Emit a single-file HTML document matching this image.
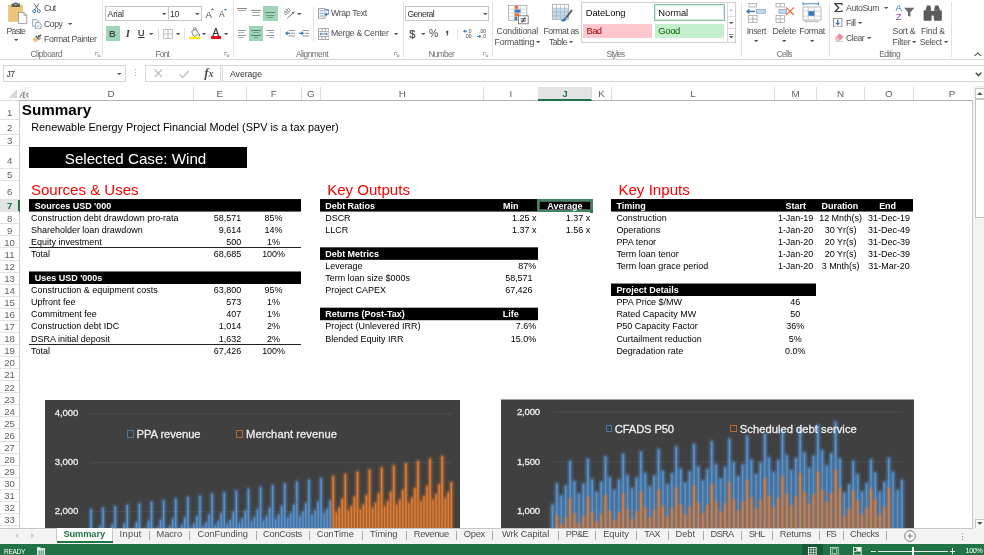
<!DOCTYPE html>
<html><head><meta charset="utf-8"><title>Summary - Excel</title>
<style>
html,body{margin:0;padding:0;}
body{width:984px;height:555px;overflow:hidden;background:#fff;position:relative;font-family:"Liberation Sans",sans-serif;}
#app{position:absolute;left:0;top:0;width:984px;height:555px;overflow:hidden;background:#fff;will-change:transform;}
#app div,#app span,#app svg{position:absolute;}
#app span{white-space:pre;display:block;}
</style></head><body><div id="app">
<div style="left:0px;top:59px;width:984px;height:1px;background:#d6d6d6;"></div>
<div style="left:102px;top:2px;width:1px;height:55px;background:#e2e2e2;"></div>
<div style="left:232.5px;top:2px;width:1px;height:55px;background:#e2e2e2;"></div>
<div style="left:403px;top:2px;width:1px;height:55px;background:#e2e2e2;"></div>
<div style="left:492px;top:2px;width:1px;height:55px;background:#e2e2e2;"></div>
<div style="left:740.5px;top:2px;width:1px;height:55px;background:#e2e2e2;"></div>
<div style="left:828.5px;top:2px;width:1px;height:55px;background:#e2e2e2;"></div>
<div style="left:950.5px;top:2px;width:1px;height:55px;background:#e2e2e2;"></div>
<svg style="left:7px;top:2px" width="21" height="23" viewBox="0 0 21 23">
<rect x="1.2" y="3" width="14.8" height="16.8" fill="#ecc57a"/>
<rect x="4.4" y="1.6" width="8.6" height="3.4" rx=".6" fill="#5e5e5e"/>
<rect x="6.9" y=".4" width="3.6" height="2.4" rx="1.1" fill="#5e5e5e"/>
<rect x="7.8" y="2" width="1.8" height="1" fill="#ecc57a"/>
<path d="M11.6 10.4h5.4l2.8 2.8v8.4h-8.2z" fill="#fff" stroke="#8a8a8a" stroke-width=".8"/>
<path d="M17 10.4v2.8h2.8" fill="none" stroke="#8a8a8a" stroke-width=".8"/>
</svg>
<span style="left:6.5px;top:25px;font-size:8.7px;line-height:12px;color:#4d4d4d;letter-spacing:-0.71px;">Paste</span>
<svg style="left:13.5px;top:39.2px" width="4.2" height="2.2" viewBox="0 0 4.2 2.2"><path d="M0 0H4.2L2.1 2.2Z" fill="#555"/></svg>
<svg style="left:32px;top:2.5px" width="9" height="10.5" viewBox="0 0 9 10.5">
<path d="M2 .5L6.2 6.6M7 .5L2.8 6.6" stroke="#6a6a6a" stroke-width="1" fill="none"/>
<circle cx="2.2" cy="8.2" r="1.5" fill="none" stroke="#3b78b8" stroke-width="1"/>
<circle cx="6.8" cy="8.2" r="1.5" fill="none" stroke="#3b78b8" stroke-width="1"/>
</svg>
<span style="left:44px;top:2px;font-size:8.7px;line-height:12px;color:#4d4d4d;letter-spacing:-0.68px;">Cut</span>
<svg style="left:32px;top:18.5px" width="10" height="10.5" viewBox="0 0 10 10.5">
<path d="M.6 .6h4.2l1.4 1.4v5.2H.6z" fill="#fff" stroke="#7b8da0" stroke-width=".8"/>
<path d="M3.6 3.4h3.6l1.8 1.8v4.6H3.6z" fill="#fff" stroke="#7b8da0" stroke-width=".8"/>
<path d="M5 6.2h2.6M5 7.8h2.6" stroke="#9fb3c8" stroke-width=".6"/>
</svg>
<span style="left:44px;top:17.6px;font-size:8.7px;line-height:12px;color:#4d4d4d;letter-spacing:-0.45px;">Copy</span>
<svg style="left:67.9px;top:22.5px" width="4.2" height="2.2" viewBox="0 0 4.2 2.2"><path d="M0 0H4.2L2.1 2.2Z" fill="#555"/></svg>
<svg style="left:32px;top:34px" width="10.4" height="9" viewBox="0 0 10.4 9">
<path d="M.4 5.2L3.6 2.6l3 3.4L3.2 8.6z" fill="#ecc57a"/>
<path d="M3.4 2.2l1-.8 3.4 3.8-1 .8z" fill="#555"/>
<path d="M5.8 2.6L8.6 .3l1 1.1-2.8 2.3z" fill="#555"/>
<path d="M7.4 3.6l2 1M6.4 1l.4 1.6" stroke="#555" stroke-width=".7"/>
</svg>
<span style="left:44px;top:32.6px;font-size:8.7px;line-height:12px;color:#4d4d4d;letter-spacing:-0.35px;">Format Painter</span>
<span style="left:30.5px;top:48.8px;font-size:8.3px;line-height:11px;color:#6e6e6e;letter-spacing:-0.45px;">Clipboard</span>
<svg style="left:95px;top:51.7px" width="5.5" height="5.5" viewBox="0 0 5.5 5.5"><path d="M.4 3.4V.4h3" fill="none" stroke="#8a8a8a" stroke-width=".7"/><path d="M2 2l2.6 2.6M4.8 2.6v2.2H2.6" fill="none" stroke="#8a8a8a" stroke-width=".7"/></svg>
<div style="left:105px;top:6px;width:64px;height:15px;background:#fff;border:1px solid #c6c6c6;box-sizing:border-box;"></div>
<div style="left:168px;top:6px;width:34px;height:15px;background:#fff;border:1px solid #c6c6c6;box-sizing:border-box;"></div>
<span style="left:107.6px;top:7.5px;font-size:8.7px;line-height:12px;color:#333;letter-spacing:-0.24px;">Arial</span>
<svg style="left:161.7px;top:12.5px" width="4.2" height="2.2" viewBox="0 0 4.2 2.2"><path d="M0 0H4.2L2.1 2.2Z" fill="#555"/></svg>
<span style="left:170px;top:7.5px;font-size:8.7px;line-height:12px;color:#333;letter-spacing:-0.44px;">10</span>
<svg style="left:194.7px;top:12.5px" width="4.2" height="2.2" viewBox="0 0 4.2 2.2"><path d="M0 0H4.2L2.1 2.2Z" fill="#555"/></svg>
<span style="left:205.4px;top:7.5px;font-size:9.6px;line-height:13px;color:#4d4d4d;">A</span>
<svg style="left:211.3px;top:8.3px" width="3" height="2" viewBox="0 0 3 2"><path d="M0 2L1.5 0L3 2Z" fill="#3b78b8"/></svg>
<span style="left:219px;top:9px;font-size:8.4px;line-height:11px;color:#4d4d4d;">A</span>
<svg style="left:224.3px;top:8.6px" width="3" height="2" viewBox="0 0 3 2"><path d="M0 0L1.5 2L3 0Z" fill="#3b78b8"/></svg>
<div style="left:105.5px;top:26.2px;width:14px;height:14.6px;background:#9fd5b7;"></div>
<span style="left:109.01px;top:27px;font-size:9.4px;line-height:13px;color:#4a4a4a;font-weight:bold;">B</span>
<span style="left:126.07px;top:26.9px;font-size:9.6px;line-height:13px;color:#333;font-weight:bold;font-style:italic;font-family:'Liberation Serif',serif;">I</span>
<span style="left:137.95px;top:27px;font-size:9px;line-height:12px;color:#333;text-decoration:underline;-webkit-text-stroke:.25px #333;">U</span>
<svg style="left:149.2px;top:32.5px" width="4.2" height="2.2" viewBox="0 0 4.2 2.2"><path d="M0 0H4.2L2.1 2.2Z" fill="#555"/></svg>
<div style="left:157.5px;top:27.5px;width:1px;height:12px;background:#e2e2e2;"></div>
<svg style="left:162.5px;top:28.5px" width="10" height="10" viewBox="0 0 10 10"><path d="M.5 .5h9v9h-9zM5 .5v9M.5 5h9" fill="none" stroke="#b9b9b9" stroke-width=".9"/></svg>
<svg style="left:175.9px;top:32.5px" width="4.2" height="2.2" viewBox="0 0 4.2 2.2"><path d="M0 0H4.2L2.1 2.2Z" fill="#555"/></svg>
<div style="left:183.7px;top:27.5px;width:1px;height:12px;background:#e2e2e2;"></div>
<svg style="left:188.5px;top:26.6px" width="12" height="12.6" viewBox="0 0 12 12.6">
<path d="M2.6 4.6L6.8 2l2.8 4.6-4 2.6a.8 .8 0 0 1-1.1-.2z" fill="#fff" stroke="#666" stroke-width=".8" stroke-linejoin="round"/>
<path d="M4.4 3.6V1.8a1.3 1.3 0 0 1 2.6 0v1.6" fill="none" stroke="#666" stroke-width=".7"/>
<path d="M10.2 6.4c1 1.4 1.2 2.2 .5 2.8c-.8.5-1.500-.4-.5-2.800z" fill="#3b78b8"/>
<rect x=".3" y="9.8" width="11.2" height="2.6" fill="#ffe800"/>
</svg>
<svg style="left:202.4px;top:32.5px" width="4.2" height="2.2" viewBox="0 0 4.2 2.2"><path d="M0 0H4.2L2.1 2.2Z" fill="#555"/></svg>
<span style="left:212.56px;top:25.5px;font-size:10px;line-height:13px;color:#333;-webkit-text-stroke:.2px #333;">A</span>
<div style="left:210.6px;top:36.4px;width:10.4px;height:2.6px;background:#e8131f;"></div>
<svg style="left:223.7px;top:32.5px" width="4.2" height="2.2" viewBox="0 0 4.2 2.2"><path d="M0 0H4.2L2.1 2.2Z" fill="#555"/></svg>
<span style="left:155.5px;top:48.8px;font-size:8.3px;line-height:11px;color:#6e6e6e;letter-spacing:-0.73px;">Font</span>
<svg style="left:224.3px;top:51.7px" width="5.5" height="5.5" viewBox="0 0 5.5 5.5"><path d="M.4 3.4V.4h3" fill="none" stroke="#8a8a8a" stroke-width=".7"/><path d="M2 2l2.6 2.6M4.8 2.6v2.2H2.6" fill="none" stroke="#8a8a8a" stroke-width=".7"/></svg>
<div style="left:237px;top:7.6px;width:10px;height:1px;background:#8a8a8a;"></div>
<div style="left:238.4px;top:10.1px;width:7.2px;height:1px;background:#a5a5a5;"></div>
<div style="left:251px;top:9.7px;width:10px;height:1px;background:#8a8a8a;"></div>
<div style="left:252.2px;top:12.2px;width:7.6px;height:1px;background:#a0a0a0;"></div>
<div style="left:252.2px;top:14.7px;width:7.6px;height:1px;background:#a0a0a0;"></div>
<div style="left:263px;top:6px;width:14.6px;height:14.8px;background:#9fd5b7;"></div>
<div style="left:265.2px;top:12.2px;width:10.2px;height:1px;background:#5f8873;"></div>
<div style="left:266.4px;top:14.5px;width:7.8px;height:1px;background:#6d957f;"></div>
<div style="left:267.4px;top:16.8px;width:5.8px;height:1px;background:#6d957f;"></div>
<div style="left:280px;top:7px;width:1px;height:12px;background:#ededed;"></div>
<svg style="left:284.3px;top:7.6px" width="11.4" height="11" viewBox="0 0 11.4 11">
<text x="0" y="0" font-size="7" font-family="Liberation Sans" fill="#666" transform="translate(1.4 7.6) rotate(-40)">ab</text>
<path d="M3.2 10.400L9.400 4.800" stroke="#666" stroke-width=".9"/><path d="M10.6 3.600l-2.800 .7 1.900 2z" fill="#666"/>
</svg>
<svg style="left:296.9px;top:12.5px" width="4.2" height="2.2" viewBox="0 0 4.2 2.2"><path d="M0 0H4.2L2.1 2.2Z" fill="#555"/></svg>
<div style="left:313px;top:6.5px;width:1px;height:35px;background:#e2e2e2;"></div>
<svg style="left:318px;top:7.8px" width="11.4" height="10.8" viewBox="0 0 11.4 10.8">
<path d="M.5 .5h6.400v9.800H.5z" fill="#fff" stroke="#8a8a8a" stroke-width=".8"/>
<path d="M1.600 2.800h4.200M1.600 5.400h4.200M1.600 8h4.200" stroke="#5b9bd5" stroke-width=".9"/>
<path d="M7.200 1.600h1.600a2.200 2.200 0 0 1 0 4.800H8" fill="none" stroke="#3b78b8" stroke-width="1.1"/><path d="M8.800 4.400L6.400 6.400l2.400 2z" fill="#3b78b8"/>
</svg>
<span style="left:331px;top:7.4px;font-size:8.7px;line-height:12px;color:#4d4d4d;letter-spacing:-0.34px;">Wrap Text</span>
<div style="left:238px;top:30.15px;width:7.8px;height:0.9px;background:#9a9a9a;"></div>
<div style="left:238px;top:32.35px;width:5.6px;height:0.9px;background:#b5b5b5;"></div>
<div style="left:238px;top:34.55px;width:7.8px;height:0.9px;background:#9a9a9a;"></div>
<div style="left:238px;top:36.75px;width:5.6px;height:0.9px;background:#b5b5b5;"></div>
<div style="left:249px;top:26px;width:14px;height:14.8px;background:#9fd5b7;"></div>
<div style="left:251px;top:30.15px;width:10px;height:0.9px;background:#5f8873;"></div>
<div style="left:253px;top:32.35px;width:6px;height:0.9px;background:#7da38e;"></div>
<div style="left:251px;top:34.55px;width:10px;height:0.9px;background:#5f8873;"></div>
<div style="left:253.6px;top:36.75px;width:4.8px;height:0.9px;background:#7da38e;"></div>
<div style="left:266.4px;top:30.15px;width:7.8px;height:0.9px;background:#9a9a9a;"></div>
<div style="left:268.6px;top:32.35px;width:5.6px;height:0.9px;background:#b5b5b5;"></div>
<div style="left:266.4px;top:34.55px;width:7.8px;height:0.9px;background:#9a9a9a;"></div>
<div style="left:268.6px;top:36.75px;width:5.6px;height:0.9px;background:#b5b5b5;"></div>
<div style="left:280px;top:27.5px;width:1px;height:12px;background:#ededed;"></div>
<svg style="left:284.6px;top:30.2px" width="10.6" height="7" viewBox="0 0 10.6 7"><path d="M3.6 0.6H10.400" stroke="#8a8a8a" stroke-width=".9"/><path d="M5.6 3.3H10.400" stroke="#8a8a8a" stroke-width=".9"/><path d="M3.6 6H10.400" stroke="#8a8a8a" stroke-width=".9"/><path d="M5 3.300H1.600" stroke="#3b78b8" stroke-width="1.3"/><path d="M0 3.300l2.600-2.200v4.400z" fill="#3b78b8"/></svg>
<svg style="left:298.8px;top:30.2px" width="10.6" height="7" viewBox="0 0 10.6 7"><path d="M3.6 0.6H10.400" stroke="#8a8a8a" stroke-width=".9"/><path d="M5.6 3.3H10.400" stroke="#8a8a8a" stroke-width=".9"/><path d="M3.6 6H10.400" stroke="#8a8a8a" stroke-width=".9"/><path d="M0 3.300h3.400" stroke="#3b78b8" stroke-width="1.3"/><path d="M5 3.300l-2.600-2.200v4.400z" fill="#3b78b8"/></svg>
<svg style="left:317.8px;top:27.6px" width="11.5" height="12" viewBox="0 0 11.5 12">
<path d="M.5 .5h10.4v11H.5zM.5 3.6h10.4M.5 8.4h10.4M4 .5v3.1M7.4 .5v3.1M4 8.4v3.1M7.4 8.4v3.1" fill="none" stroke="#8a8a8a" stroke-width=".7"/>
<path d="M2.6 6h6.2" stroke="#3b78b8" stroke-width=".9"/><path d="M1.4 6l1.8-1.5v3zM10 6L8.2 4.5v3z" fill="#3b78b8"/>
</svg>
<span style="left:331px;top:27.3px;font-size:8.7px;line-height:12px;color:#4d4d4d;letter-spacing:-0.27px;">Merge &amp; Center</span>
<svg style="left:393.9px;top:32.5px" width="4.2" height="2.2" viewBox="0 0 4.2 2.2"><path d="M0 0H4.2L2.1 2.2Z" fill="#555"/></svg>
<span style="left:296px;top:48.8px;font-size:8.3px;line-height:11px;color:#6e6e6e;letter-spacing:-0.55px;">Alignment</span>
<svg style="left:394.3px;top:51.7px" width="5.5" height="5.5" viewBox="0 0 5.5 5.5"><path d="M.4 3.4V.4h3" fill="none" stroke="#8a8a8a" stroke-width=".7"/><path d="M2 2l2.6 2.6M4.8 2.6v2.2H2.6" fill="none" stroke="#8a8a8a" stroke-width=".7"/></svg>
<div style="left:405px;top:6px;width:84px;height:15px;background:#fff;border:1px solid #c6c6c6;box-sizing:border-box;"></div>
<span style="left:407.4px;top:7.5px;font-size:8.7px;line-height:12px;color:#333;letter-spacing:-0.62px;">General</span>
<svg style="left:482.5px;top:12.5px" width="4.2" height="2.2" viewBox="0 0 4.2 2.2"><path d="M0 0H4.2L2.1 2.2Z" fill="#555"/></svg>
<span style="left:409.14px;top:26.5px;font-size:11px;line-height:15px;color:#4a4a4a;-webkit-text-stroke:.25px #4a4a4a;">$</span>
<svg style="left:420.7px;top:32.5px" width="4.2" height="2.2" viewBox="0 0 4.2 2.2"><path d="M0 0H4.2L2.1 2.2Z" fill="#555"/></svg>
<span style="left:428.98px;top:26.6px;font-size:10.4px;line-height:14px;color:#4a4a4a;">%</span>
<span style="left:445.36px;top:19.1px;font-size:14px;line-height:19px;color:#4a4a4a;font-weight:bold;">,</span>
<div style="left:457px;top:27.5px;width:1px;height:12px;background:#e2e2e2;"></div>
<svg style="left:462.8px;top:29px" width="9.6" height="10" viewBox="0 0 9.6 10">
<path d="M4 2.2H1.2" stroke="#3b78b8" stroke-width="1.1"/><path d="M0 2.2L2.2 .4v3.6z" fill="#3b78b8"/>
<text x="4.4" y="4" font-size="5" font-family="Liberation Sans" fill="#444">.0</text>
<text x="1.6" y="9.2" font-size="5" font-family="Liberation Sans" fill="#444">.00</text>
</svg>
<svg style="left:477px;top:29px" width="9.6" height="10" viewBox="0 0 9.6 10">
<text x="2.2" y="4" font-size="5" font-family="Liberation Sans" fill="#444">.00</text>
<path d="M0 7.4h2.8" stroke="#3b78b8" stroke-width="1.1"/><path d="M4.400 7.4L2.2 5.6v3.6z" fill="#3b78b8"/>
<text x="5" y="9.2" font-size="5" font-family="Liberation Sans" fill="#444">.0</text>
</svg>
<span style="left:428.5px;top:48.8px;font-size:8.3px;line-height:11px;color:#6e6e6e;letter-spacing:-0.67px;">Number</span>
<svg style="left:483.1px;top:51.7px" width="5.5" height="5.5" viewBox="0 0 5.5 5.5"><path d="M.4 3.4V.4h3" fill="none" stroke="#8a8a8a" stroke-width=".7"/><path d="M2 2l2.6 2.6M4.8 2.6v2.2H2.6" fill="none" stroke="#8a8a8a" stroke-width=".7"/></svg>
<svg style="left:508px;top:4.6px" width="22" height="20" viewBox="0 0 22 20">
<rect x=".5" y=".5" width="18.4" height="14.8" fill="#fff" stroke="#9a9a9a" stroke-width=".7"/>
<path d="M.5 4.2h18.4M.5 7.900h18.400M.5 11.6h18.4M6.400 .5v14.800M12.8 .5v14.8" stroke="#c2c2c2" stroke-width=".6"/>
<rect x="6.700" y=".8" width="3.4" height="3.1" fill="#e8743b"/><rect x="6.700" y="4.500" width="5.800" height="3.1" fill="#3b78b8"/>
<rect x="6.700" y="8.200" width="4.6" height="3.1" fill="#e8743b"/><rect x="6.700" y="11.900" width="2.600" height="3.1" fill="#3b78b8"/>
<rect x="10.400" y="10.800" width="9.800" height="8" fill="#fff" stroke="#6a6a6a" stroke-width=".8"/>
<path d="M12.600 13.800h5.400M12.600 16h5.400M17 12.200l-3 5.400" stroke="#333" stroke-width=".9"/>
</svg>
<span style="left:496.6px;top:25.2px;font-size:8.7px;line-height:12px;color:#4d4d4d;letter-spacing:-0.18px;">Conditional</span>
<span style="left:494.6px;top:35.7px;font-size:8.7px;line-height:12px;color:#4d4d4d;letter-spacing:-0.2px;">Formatting</span>
<svg style="left:536.1px;top:40.5px" width="4.2" height="2.2" viewBox="0 0 4.2 2.2"><path d="M0 0H4.2L2.1 2.2Z" fill="#555"/></svg>
<svg style="left:552px;top:4.2px" width="22" height="20" viewBox="0 0 22 20">
<rect x=".5" y=".5" width="16" height="15" fill="#fff" stroke="#9a9a9a" stroke-width=".7"/>
<rect x=".9" y="4.4" width="15.2" height="10.8" fill="#c5d9ee"/>
<path d="M.5 4.2h16M.5 8h16M.5 11.8h16M4.5 .5v15M8.5 .5v15M12.5 .5v15" stroke="#9fb0c2" stroke-width=".6"/>
<path d="M13.2 13.4l6-8 1.6 1.2-6 8z" fill="#5a5a5a"/><path d="M12.8 13.8c-1.6.4-2.4 2.4-4.4 3.2 2.6 1 5.4.4 6-1.8z" fill="#3b78b8"/>
</svg>
<span style="left:543.4px;top:25.2px;font-size:8.7px;line-height:12px;color:#4d4d4d;letter-spacing:-0.42px;">Format as</span>
<span style="left:549px;top:35.7px;font-size:8.7px;line-height:12px;color:#4d4d4d;letter-spacing:-0.56px;">Table</span>
<svg style="left:569.4px;top:40.5px" width="4.2" height="2.2" viewBox="0 0 4.2 2.2"><path d="M0 0H4.2L2.1 2.2Z" fill="#555"/></svg>
<div style="left:581.2px;top:2px;width:154.6px;height:40.6px;background:#fff;border:1px solid #d0d0d0;box-sizing:border-box;"></div>
<span style="left:585.8px;top:6.1px;font-size:9.4px;line-height:13px;color:#111;letter-spacing:-0.13px;">DateLong</span>
<div style="left:654px;top:3.8px;width:71.4px;height:17.6px;background:#fff;border:1px solid #86c3a2;box-sizing:border-box;"></div>
<div style="left:655px;top:4.8px;width:69.4px;height:15.6px;background:#fff;border:1px solid #d7eadf;box-sizing:border-box;"></div>
<span style="left:658.3px;top:6.1px;font-size:9.4px;line-height:13px;color:#111;letter-spacing:-0.07px;">Normal</span>
<div style="left:583.2px;top:23.8px;width:69px;height:14.4px;background:#ffc7ce;"></div>
<span style="left:586.6px;top:24.1px;font-size:9.4px;line-height:13px;color:#9c0006;letter-spacing:-0.61px;">Bad</span>
<div style="left:655px;top:23.8px;width:69.2px;height:14.4px;background:#c6efce;"></div>
<span style="left:658.3px;top:24.1px;font-size:9.4px;line-height:13px;color:#006100;letter-spacing:-0.32px;">Good</span>
<div style="left:726.6px;top:2px;width:1px;height:40.6px;background:#d9d9d9;"></div>
<div style="left:726.6px;top:16px;width:9px;height:1px;background:#d9d9d9;"></div>
<div style="left:726.6px;top:28.4px;width:9px;height:1px;background:#d9d9d9;"></div>
<svg style="left:729.2px;top:8.6px" width="4.2" height="2.2" viewBox="0 0 4.2 2.2"><path d="M0 2.2H4.2L2.1 0Z" fill="#c2c2c2"/></svg>
<svg style="left:729.2px;top:22.1px" width="4.2" height="2.2" viewBox="0 0 4.2 2.2"><path d="M0 0H4.2L2.1 2.2Z" fill="#555"/></svg>
<svg style="left:729.2px;top:33.6px" width="4.4" height="4.6" viewBox="0 0 4.4 4.6"><path d="M0 .4h4.4" stroke="#555" stroke-width=".8"/><path d="M0 2H4.4L2.2 4.4Z" fill="#555"/></svg>
<span style="left:606.5px;top:48.8px;font-size:8.3px;line-height:11px;color:#6e6e6e;letter-spacing:-0.77px;">Styles</span>
<svg style="left:746px;top:2.8px" width="21" height="20" viewBox="0 0 21 20">
<rect x="3" y=".6" width="7.6" height="3.4" fill="#fff" stroke="#9a9a9a" stroke-width=".7"/>
<rect x="10.4" y="6.6" width="9" height="3.6" fill="#c5d9ee" stroke="#7f9cbd" stroke-width=".7"/>
<path d="M9 8.4H2" stroke="#3b78b8" stroke-width="1.4"/><path d="M0 8.4l3.4-2.8v5.6z" fill="#3b78b8"/>
<rect x="2.6" y="12.6" width="8.4" height="6.8" fill="#fff" stroke="#9a9a9a" stroke-width=".7"/>
<path d="M2.6 16h8.4M6.8 12.6v6.8" stroke="#9a9a9a" stroke-width=".7"/>
</svg>
<span style="left:746.8px;top:25.2px;font-size:8.7px;line-height:12px;color:#4d4d4d;letter-spacing:-0.43px;">Insert</span>
<svg style="left:754.2px;top:40.3px" width="4.2" height="2.2" viewBox="0 0 4.2 2.2"><path d="M0 0H4.2L2.1 2.2Z" fill="#555"/></svg>
<svg style="left:775px;top:2.8px" width="21" height="20" viewBox="0 0 21 20">
<rect x="1" y=".6" width="8.6" height="3.4" fill="#fff" stroke="#9a9a9a" stroke-width=".7"/>
<path d="M5.2 .6v3.4" stroke="#9a9a9a" stroke-width=".7"/>
<rect x="4" y="6.6" width="7.4" height="3.6" fill="#c5d9ee" stroke="#7f9cbd" stroke-width=".7"/>
<path d="M11 4.4l8 7.6M19 4.4l-8 7.6" stroke="#e8743b" stroke-width="1.3"/>
<rect x="1" y="12.6" width="8.6" height="6.8" fill="#fff" stroke="#9a9a9a" stroke-width=".7"/>
<path d="M1 16h8.6M5.2 12.6v6.8" stroke="#9a9a9a" stroke-width=".7"/>
</svg>
<span style="left:772.6px;top:25.2px;font-size:8.7px;line-height:12px;color:#4d4d4d;letter-spacing:-0.29px;">Delete</span>
<svg style="left:781.7px;top:40.3px" width="4.2" height="2.2" viewBox="0 0 4.2 2.2"><path d="M0 0H4.2L2.1 2.2Z" fill="#555"/></svg>
<svg style="left:801.6px;top:2px" width="21" height="21" viewBox="0 0 21 21">
<path d="M1 1.8h15.4M1 .2v3.2M16.4 .2v3.2" stroke="#3b78b8" stroke-width=".9"/>
<rect x="1" y="5" width="18" height="13" fill="#fff" stroke="#9a9a9a" stroke-width=".7"/>
<path d="M1 9h18M1 14h18M6.2 5v13M12.6 5v13" stroke="#b5b5b5" stroke-width=".6"/>
<rect x="6.4" y="9.2" width="6" height="4.6" fill="#3b78b8"/>
<path d="M3 18v1.6h14" fill="none" stroke="#9a9a9a" stroke-width=".7"/>
</svg>
<span style="left:799.3px;top:25.2px;font-size:8.7px;line-height:12px;color:#4d4d4d;letter-spacing:-0.34px;">Format</span>
<svg style="left:809.7px;top:40.3px" width="4.2" height="2.2" viewBox="0 0 4.2 2.2"><path d="M0 0H4.2L2.1 2.2Z" fill="#555"/></svg>
<span style="left:776.8px;top:48.8px;font-size:8.3px;line-height:11px;color:#6e6e6e;letter-spacing:-0.69px;">Cells</span>
<svg style="left:833.6px;top:3px" width="9" height="9.4" viewBox="0 0 9 9.4"><path d="M8 2.200V.7H.9L4.800 4.700 .9 8.700H8V7.200" fill="none" stroke="#3a3a3a" stroke-width="1.25"/></svg>
<span style="left:846px;top:1.8px;font-size:8.7px;line-height:12px;color:#4d4d4d;letter-spacing:-0.37px;">AutoSum</span>
<svg style="left:883.9px;top:6.9px" width="4.2" height="2.2" viewBox="0 0 4.2 2.2"><path d="M0 0H4.2L2.1 2.2Z" fill="#555"/></svg>
<svg style="left:833.4px;top:18px" width="9.4" height="9.4" viewBox="0 0 9.4 9.4"><rect x=".5" y=".5" width="8.4" height="8.4" fill="#fff" stroke="#7a7a7a" stroke-width=".8"/><path d="M4.7 1.8v4" stroke="#3b78b8" stroke-width="1.3"/><path d="M2.2 4.8h5L4.7 7.6z" fill="#3b78b8"/></svg>
<span style="left:846px;top:16.6px;font-size:8.7px;line-height:12px;color:#4d4d4d;letter-spacing:-0.4px;">Fill</span>
<svg style="left:857.7px;top:21.9px" width="4.2" height="2.2" viewBox="0 0 4.2 2.2"><path d="M0 0H4.2L2.1 2.2Z" fill="#555"/></svg>
<svg style="left:833.6px;top:33px" width="10" height="9" viewBox="0 0 10 9"><path d="M5.6 .6l3.8 3-3.4 4.2H3L.6 5.6z" fill="#f08a9b"/><path d="M.6 5.6L3 7.8h3L3.4 4z" fill="#f6c5cc"/><path d="M1 8.4h8" stroke="#b9b9b9" stroke-width=".7"/></svg>
<span style="left:846px;top:31.6px;font-size:8.7px;line-height:12px;color:#4d4d4d;letter-spacing:-0.52px;">Clear</span>
<svg style="left:866.5px;top:36.9px" width="4.2" height="2.2" viewBox="0 0 4.2 2.2"><path d="M0 0H4.2L2.1 2.2Z" fill="#555"/></svg>
<svg style="left:894.6px;top:3px" width="21" height="19" viewBox="0 0 21 19">
<text x=".4" y="7.900" font-size="9.6" font-family="Liberation Sans" fill="#3b78b8">A</text>
<text x=".8" y="17.400" font-size="9.6" font-family="Liberation Sans" fill="#8a4fa3">Z</text>
<path d="M9 4.800h10.400l-4 4.400v4.600l-2.400-1V9.200z" fill="#6a6a6a"/>
</svg>
<span style="left:892.6px;top:25.2px;font-size:8.7px;line-height:12px;color:#4d4d4d;letter-spacing:-0.23px;">Sort &amp;</span>
<span style="left:892.6px;top:35.7px;font-size:8.7px;line-height:12px;color:#4d4d4d;letter-spacing:-0.26px;">Filter</span>
<svg style="left:912.2px;top:40.5px" width="4.2" height="2.2" viewBox="0 0 4.2 2.2"><path d="M0 0H4.2L2.1 2.2Z" fill="#555"/></svg>
<svg style="left:923.4px;top:3.6px" width="20" height="18" viewBox="0 0 20 18">
<path d="M2.4 6.6L4 1.4h3.4l.8 5.2z" fill="#5a5a5a"/><path d="M17 6.6l-1.6-5.2H12l-.8 5.2z" fill="#5a5a5a"/>
<rect x=".6" y="6.2" width="8" height="10.6" rx="1" fill="#5a5a5a"/><rect x="10.8" y="6.2" width="8" height="10.6" rx="1" fill="#5a5a5a"/>
<rect x="8" y="7" width="3.4" height="4.6" fill="#5a5a5a"/>
</svg>
<span style="left:921px;top:25.2px;font-size:8.7px;line-height:12px;color:#4d4d4d;letter-spacing:-0.19px;">Find &amp;</span>
<span style="left:919.8px;top:35.7px;font-size:8.7px;line-height:12px;color:#4d4d4d;letter-spacing:-0.36px;">Select</span>
<svg style="left:943.5px;top:40.5px" width="4.2" height="2.2" viewBox="0 0 4.2 2.2"><path d="M0 0H4.2L2.1 2.2Z" fill="#555"/></svg>
<span style="left:879.3px;top:48.8px;font-size:8.3px;line-height:11px;color:#6e6e6e;letter-spacing:-0.67px;">Editing</span>
<svg style="left:973.6px;top:51.6px" width="7.6" height="4.6" viewBox="0 0 7.6 4.6"><path d="M.6 4L3.8 .9 7 4" fill="none" stroke="#555" stroke-width="1.1"/></svg>
<div style="left:3px;top:65px;width:123px;height:17px;background:#fff;border:1px solid #d6d6d6;box-sizing:border-box;"></div>
<span style="left:6.6px;top:67.6px;font-size:8.7px;line-height:12px;color:#333;letter-spacing:-0.59px;">J7</span>
<svg style="left:116.6px;top:72.5px" width="4.2" height="2.2" viewBox="0 0 4.2 2.2"><path d="M0 0H4.2L2.1 2.2Z" fill="#555"/></svg>
<div style="left:134.8px;top:69.4px;width:1px;height:1px;background:#b0b0b0;"></div>
<div style="left:134.8px;top:72.4px;width:1px;height:1px;background:#b0b0b0;"></div>
<div style="left:134.8px;top:75.4px;width:1px;height:1px;background:#b0b0b0;"></div>
<div style="left:145px;top:65px;width:76px;height:17px;background:#fff;border:1px solid #d6d6d6;box-sizing:border-box;"></div>
<svg style="left:154.2px;top:69.4px" width="8.6" height="8.6" viewBox="0 0 8.6 8.6"><path d="M.6 .6l7.4 7.4M8 .6L.6 8" stroke="#c2c2c2" stroke-width="1.4"/></svg>
<svg style="left:178.6px;top:69.6px" width="10.6" height="8.4" viewBox="0 0 10.6 8.4"><path d="M.6 4.6l3 3L10 .7" fill="none" stroke="#c2c2c2" stroke-width="1.5"/></svg>
<span style="left:204.24px;top:64.3px;font-size:13px;line-height:17px;color:#505050;font-weight:bold;font-style:italic;font-family:'Liberation Serif',serif;">f</span>
<span style="left:208.69px;top:67.9px;font-size:9.4px;line-height:13px;color:#505050;font-weight:bold;font-style:italic;font-family:'Liberation Serif',serif;">x</span>
<div style="left:222px;top:65px;width:770px;height:17px;background:#fff;border:1px solid #d6d6d6;box-sizing:border-box;"></div>
<span style="left:230px;top:67.8px;font-size:8.7px;line-height:12px;color:#333;letter-spacing:-0.04px;">Average</span>
<svg style="left:974.6px;top:72px" width="7" height="4.8" viewBox="0 0 7 4.8"><path d="M.8 .8L3.5 3.5 6.2 .8" fill="none" stroke="#505050" stroke-width="1.6"/></svg>
<div style="left:0px;top:100px;width:973px;height:1px;background:#b4b4b4;"></div>
<div style="left:0px;top:100px;width:18px;height:1px;background:#dedede;"></div>
<svg style="left:8.2px;top:89.4px" width="9.2" height="9.2" viewBox="0 0 9.2 9.2"><path d="M9 .2V9H.2Z" fill="#d8d8d8"/></svg>
<div style="left:19.2px;top:87px;width:2.9px;height:13px;overflow:hidden"><span style="left:0;top:0.6px;font-size:9.4px;line-height:13px;color:#666">A</span></div>
<div style="left:22.6px;top:87px;width:3.0px;height:13px;overflow:hidden"><span style="left:0;top:0.6px;font-size:9.4px;line-height:13px;color:#666">B</span></div>
<div style="left:25.9px;top:87px;width:3.0px;height:13px;overflow:hidden"><span style="left:0;top:0.6px;font-size:9.4px;line-height:13px;color:#666">C</span></div>
<div style="left:22.2px;top:87px;width:0.6px;height:13px;background:#e6e6e6;"></div>
<div style="left:25.2px;top:87px;width:0.6px;height:13px;background:#e6e6e6;"></div>
<div style="left:28.4px;top:87px;width:0.6px;height:13px;background:#e6e6e6;"></div>
<span style="left:107.46px;top:87.1px;font-size:9.8px;line-height:13px;color:#5f5f5f;">D</span>
<div style="left:192.5px;top:87px;width:1px;height:13px;background:#dcdcdc;"></div>
<span style="left:216.48px;top:87.1px;font-size:9.8px;line-height:13px;color:#5f5f5f;">E</span>
<div style="left:246px;top:87px;width:1px;height:13px;background:#dcdcdc;"></div>
<span style="left:270.76px;top:87.1px;font-size:9.8px;line-height:13px;color:#5f5f5f;">F</span>
<div style="left:300.5px;top:87px;width:1px;height:13px;background:#dcdcdc;"></div>
<span style="left:306.99px;top:87.1px;font-size:9.8px;line-height:13px;color:#5f5f5f;">G</span>
<div style="left:320.1px;top:87px;width:1px;height:13px;background:#dcdcdc;"></div>
<span style="left:398.66px;top:87.1px;font-size:9.8px;line-height:13px;color:#5f5f5f;">H</span>
<div style="left:483.3px;top:87px;width:1px;height:13px;background:#dcdcdc;"></div>
<span style="left:509.54px;top:87.1px;font-size:9.8px;line-height:13px;color:#5f5f5f;">I</span>
<div style="left:537.5px;top:87px;width:1px;height:13px;background:#dcdcdc;"></div>
<div style="left:538px;top:86.5px;width:53.8px;height:13.5px;background:#e3e3e3;"></div>
<div style="left:538px;top:99.4px;width:53.8px;height:1.4px;background:#217346;"></div>
<span style="left:562.17px;top:87.1px;font-size:9.8px;line-height:13px;color:#217346;font-weight:bold;">J</span>
<div style="left:591.3px;top:87px;width:1px;height:13px;background:#dcdcdc;"></div>
<span style="left:598.13px;top:87.1px;font-size:9.8px;line-height:13px;color:#5f5f5f;">K</span>
<div style="left:610.5px;top:87px;width:1px;height:13px;background:#dcdcdc;"></div>
<span style="left:690.17px;top:87.1px;font-size:9.8px;line-height:13px;color:#5f5f5f;">L</span>
<div style="left:774.3px;top:87px;width:1px;height:13px;background:#dcdcdc;"></div>
<span style="left:791.52px;top:87.1px;font-size:9.8px;line-height:13px;color:#5f5f5f;">M</span>
<div style="left:815.9px;top:87px;width:1px;height:13px;background:#dcdcdc;"></div>
<span style="left:837.01px;top:87.1px;font-size:9.8px;line-height:13px;color:#5f5f5f;">N</span>
<div style="left:864.2px;top:87px;width:1px;height:13px;background:#dcdcdc;"></div>
<span style="left:885.04px;top:87.1px;font-size:9.8px;line-height:13px;color:#5f5f5f;">O</span>
<div style="left:912.5px;top:87px;width:1px;height:13px;background:#dcdcdc;"></div>
<span style="left:948.73px;top:87.1px;font-size:9.8px;line-height:13px;color:#5f5f5f;">P</span>
<div style="left:18.7px;top:101px;width:1px;height:427px;background:#c9c9c9;"></div>
<span style="left:6.93px;top:105.7px;font-size:9.6px;line-height:13px;color:#5f5f5f;">1</span>
<div style="left:0px;top:119.3px;width:18.7px;height:1px;background:#e2e2e2;"></div>
<span style="left:6.93px;top:120.7px;font-size:9.6px;line-height:13px;color:#5f5f5f;">2</span>
<div style="left:0px;top:134.3px;width:18.7px;height:1px;background:#e2e2e2;"></div>
<span style="left:6.93px;top:133.9px;font-size:9.6px;line-height:13px;color:#5f5f5f;">3</span>
<div style="left:0px;top:144.9px;width:18.7px;height:1px;background:#e2e2e2;"></div>
<span style="left:6.93px;top:154.2px;font-size:9.6px;line-height:13px;color:#5f5f5f;">4</span>
<div style="left:0px;top:167.9px;width:18.7px;height:1px;background:#e2e2e2;"></div>
<span style="left:6.93px;top:168.2px;font-size:9.6px;line-height:13px;color:#5f5f5f;">5</span>
<div style="left:0px;top:179.9px;width:18.7px;height:1px;background:#e2e2e2;"></div>
<span style="left:6.93px;top:184.75px;font-size:9.6px;line-height:13px;color:#5f5f5f;">6</span>
<div style="left:0px;top:199.15px;width:18.7px;height:1px;background:#e2e2e2;"></div>
<div style="left:0px;top:199.65px;width:18.7px;height:12.07px;background:#e3e3e3;"></div>
<div style="left:17.7px;top:199.65px;width:2px;height:12.07px;background:#217346;"></div>
<span style="left:6.93px;top:199.38px;font-size:9.6px;line-height:13px;color:#217346;font-weight:bold;">7</span>
<div style="left:0px;top:211.22px;width:18.7px;height:1px;background:#e2e2e2;"></div>
<span style="left:6.93px;top:211.56px;font-size:9.6px;line-height:13px;color:#5f5f5f;">8</span>
<div style="left:0px;top:223.29px;width:18.7px;height:1px;background:#e2e2e2;"></div>
<span style="left:6.93px;top:223.63px;font-size:9.6px;line-height:13px;color:#5f5f5f;">9</span>
<div style="left:0px;top:235.36px;width:18.7px;height:1px;background:#e2e2e2;"></div>
<span style="left:4.26px;top:235.7px;font-size:9.6px;line-height:13px;color:#5f5f5f;">10</span>
<div style="left:0px;top:247.43px;width:18.7px;height:1px;background:#e2e2e2;"></div>
<span style="left:4.62px;top:247.77px;font-size:9.6px;line-height:13px;color:#5f5f5f;">11</span>
<div style="left:0px;top:259.5px;width:18.7px;height:1px;background:#e2e2e2;"></div>
<span style="left:4.26px;top:259.83px;font-size:9.6px;line-height:13px;color:#5f5f5f;">12</span>
<div style="left:0px;top:271.57px;width:18.7px;height:1px;background:#e2e2e2;"></div>
<span style="left:4.26px;top:271.91px;font-size:9.6px;line-height:13px;color:#5f5f5f;">13</span>
<div style="left:0px;top:283.64px;width:18.7px;height:1px;background:#e2e2e2;"></div>
<span style="left:4.26px;top:283.98px;font-size:9.6px;line-height:13px;color:#5f5f5f;">14</span>
<div style="left:0px;top:295.71px;width:18.7px;height:1px;background:#e2e2e2;"></div>
<span style="left:4.26px;top:296.05px;font-size:9.6px;line-height:13px;color:#5f5f5f;">15</span>
<div style="left:0px;top:307.78px;width:18.7px;height:1px;background:#e2e2e2;"></div>
<span style="left:4.26px;top:308.12px;font-size:9.6px;line-height:13px;color:#5f5f5f;">16</span>
<div style="left:0px;top:319.85px;width:18.7px;height:1px;background:#e2e2e2;"></div>
<span style="left:4.26px;top:320.19px;font-size:9.6px;line-height:13px;color:#5f5f5f;">17</span>
<div style="left:0px;top:331.92px;width:18.7px;height:1px;background:#e2e2e2;"></div>
<span style="left:4.26px;top:332.26px;font-size:9.6px;line-height:13px;color:#5f5f5f;">18</span>
<div style="left:0px;top:343.99px;width:18.7px;height:1px;background:#e2e2e2;"></div>
<span style="left:4.26px;top:344.32px;font-size:9.6px;line-height:13px;color:#5f5f5f;">19</span>
<div style="left:0px;top:356.06px;width:18.7px;height:1px;background:#e2e2e2;"></div>
<span style="left:4.26px;top:356.4px;font-size:9.6px;line-height:13px;color:#5f5f5f;">20</span>
<div style="left:0px;top:368.13px;width:18.7px;height:1px;background:#e2e2e2;"></div>
<span style="left:4.26px;top:368.47px;font-size:9.6px;line-height:13px;color:#5f5f5f;">21</span>
<div style="left:0px;top:380.2px;width:18.7px;height:1px;background:#e2e2e2;"></div>
<span style="left:4.26px;top:380.54px;font-size:9.6px;line-height:13px;color:#5f5f5f;">22</span>
<div style="left:0px;top:392.27px;width:18.7px;height:1px;background:#e2e2e2;"></div>
<span style="left:4.26px;top:392.61px;font-size:9.6px;line-height:13px;color:#5f5f5f;">23</span>
<div style="left:0px;top:404.34px;width:18.7px;height:1px;background:#e2e2e2;"></div>
<span style="left:4.26px;top:404.68px;font-size:9.6px;line-height:13px;color:#5f5f5f;">24</span>
<div style="left:0px;top:416.41px;width:18.7px;height:1px;background:#e2e2e2;"></div>
<span style="left:4.26px;top:416.75px;font-size:9.6px;line-height:13px;color:#5f5f5f;">25</span>
<div style="left:0px;top:428.48px;width:18.7px;height:1px;background:#e2e2e2;"></div>
<span style="left:4.26px;top:428.81px;font-size:9.6px;line-height:13px;color:#5f5f5f;">26</span>
<div style="left:0px;top:440.55px;width:18.7px;height:1px;background:#e2e2e2;"></div>
<span style="left:4.26px;top:440.89px;font-size:9.6px;line-height:13px;color:#5f5f5f;">27</span>
<div style="left:0px;top:452.62px;width:18.7px;height:1px;background:#e2e2e2;"></div>
<span style="left:4.26px;top:452.96px;font-size:9.6px;line-height:13px;color:#5f5f5f;">28</span>
<div style="left:0px;top:464.69px;width:18.7px;height:1px;background:#e2e2e2;"></div>
<span style="left:4.26px;top:465.03px;font-size:9.6px;line-height:13px;color:#5f5f5f;">29</span>
<div style="left:0px;top:476.76px;width:18.7px;height:1px;background:#e2e2e2;"></div>
<span style="left:4.26px;top:477.1px;font-size:9.6px;line-height:13px;color:#5f5f5f;">30</span>
<div style="left:0px;top:488.83px;width:18.7px;height:1px;background:#e2e2e2;"></div>
<span style="left:4.26px;top:489.17px;font-size:9.6px;line-height:13px;color:#5f5f5f;">31</span>
<div style="left:0px;top:500.9px;width:18.7px;height:1px;background:#e2e2e2;"></div>
<span style="left:4.26px;top:501.24px;font-size:9.6px;line-height:13px;color:#5f5f5f;">32</span>
<div style="left:0px;top:512.97px;width:18.7px;height:1px;background:#e2e2e2;"></div>
<span style="left:4.26px;top:513.3px;font-size:9.6px;line-height:13px;color:#5f5f5f;">33</span>
<div style="left:0px;top:525.04px;width:18.7px;height:1px;background:#e2e2e2;"></div>
<div style="left:973px;top:86px;width:11px;height:442px;background:#f3f3f3;"></div>
<div style="left:972px;top:101px;width:1px;height:427px;background:#c9c9c9;"></div>
<div style="left:974.5px;top:88.4px;width:10px;height:11px;background:#fff;border:1px solid #c8c8c8;box-sizing:border-box;"></div>
<svg style="left:977px;top:92.4px" width="5.6" height="3" viewBox="0 0 5.6 3"><path d="M0 3H5.6L2.8 0Z" fill="#555"/></svg>
<div style="left:974.6px;top:99px;width:10px;height:118.8px;background:#fff;border:1px solid #c4c4c4;box-sizing:border-box;"></div>
<div style="left:974.5px;top:518.6px;width:10px;height:10px;background:#fff;border:1px solid #c8c8c8;box-sizing:border-box;"></div>
<svg style="left:976.8px;top:522px" width="5.6" height="3" viewBox="0 0 5.6 3"><path d="M0 0H5.6L2.8 3Z" fill="#555"/></svg>
<span style="left:21.8px;top:100px;font-size:15.2px;line-height:20px;color:#000;font-weight:bold;letter-spacing:0.03px;">Summary</span>
<span style="left:31.2px;top:119.8px;font-size:10.9px;line-height:15px;color:#000;letter-spacing:-0.01px;">Renewable Energy Project Financial Model (SPV is a tax payer)</span>
<div style="left:28.6px;top:147px;width:218px;height:21.2px;background:#000;"></div>
<span style="left:64.8px;top:148.9px;font-size:15.2px;line-height:20px;color:#fff;letter-spacing:-0.02px;">Selected Case: Wind</span>
<span style="left:30.9px;top:180px;font-size:15.1px;line-height:20px;color:#ff0000;letter-spacing:-0.04px;">Sources &amp; Uses</span>
<span style="left:327.2px;top:180px;font-size:15.1px;line-height:20px;color:#ff0000;letter-spacing:-0.03px;">Key Outputs</span>
<span style="left:618.4px;top:180px;font-size:15.1px;line-height:20px;color:#ff0000;letter-spacing:0.01px;">Key Inputs</span>
<div style="left:29px;top:199px;width:272px;height:1px;background:#0d0d0d;"></div>
<div style="left:29px;top:200px;width:272px;height:11px;background:#000;"></div>
<div style="left:29px;top:211px;width:272px;height:1px;background:#6e6e6e;"></div>
<span style="left:34.8px;top:199.78px;font-size:8.97px;line-height:12px;color:#fff;font-weight:bold;">Sources USD &#x27;000</span>
<span style="left:31px;top:211.85px;font-size:8.97px;line-height:12px;color:#000;">Construction debt drawdown pro-rata</span>
<span style="left:213.76px;top:211.85px;font-size:8.97px;line-height:12px;color:#000;">58,571</span>
<span style="left:264.62px;top:211.85px;font-size:8.97px;line-height:12px;color:#000;">85%</span>
<span style="left:31px;top:223.93px;font-size:8.97px;line-height:12px;color:#000;">Shareholder loan drawdown</span>
<span style="left:218.75px;top:223.93px;font-size:8.97px;line-height:12px;color:#000;">9,614</span>
<span style="left:264.62px;top:223.93px;font-size:8.97px;line-height:12px;color:#000;">14%</span>
<span style="left:31px;top:236px;font-size:8.97px;line-height:12px;color:#000;">Equity investment</span>
<span style="left:226.23px;top:236px;font-size:8.97px;line-height:12px;color:#000;">500</span>
<span style="left:267.12px;top:236px;font-size:8.97px;line-height:12px;color:#000;">1%</span>
<span style="left:31px;top:248.06px;font-size:8.97px;line-height:12px;color:#000;">Total</span>
<span style="left:213.76px;top:248.06px;font-size:8.97px;line-height:12px;color:#000;">68,685</span>
<span style="left:262.13px;top:248.06px;font-size:8.97px;line-height:12px;color:#000;">100%</span>
<span style="left:31px;top:284.28px;font-size:8.97px;line-height:12px;color:#000;">Construction &amp; equipment costs</span>
<span style="left:213.76px;top:284.28px;font-size:8.97px;line-height:12px;color:#000;">63,800</span>
<span style="left:264.62px;top:284.28px;font-size:8.97px;line-height:12px;color:#000;">95%</span>
<span style="left:31px;top:296.35px;font-size:8.97px;line-height:12px;color:#000;">Upfront fee</span>
<span style="left:226.23px;top:296.35px;font-size:8.97px;line-height:12px;color:#000;">573</span>
<span style="left:267.12px;top:296.35px;font-size:8.97px;line-height:12px;color:#000;">1%</span>
<span style="left:31px;top:308.42px;font-size:8.97px;line-height:12px;color:#000;">Commitment fee</span>
<span style="left:226.23px;top:308.42px;font-size:8.97px;line-height:12px;color:#000;">407</span>
<span style="left:267.12px;top:308.42px;font-size:8.97px;line-height:12px;color:#000;">1%</span>
<span style="left:31px;top:320.49px;font-size:8.97px;line-height:12px;color:#000;">Construction debt IDC</span>
<span style="left:218.75px;top:320.49px;font-size:8.97px;line-height:12px;color:#000;">1,014</span>
<span style="left:267.12px;top:320.49px;font-size:8.97px;line-height:12px;color:#000;">2%</span>
<span style="left:31px;top:332.56px;font-size:8.97px;line-height:12px;color:#000;">DSRA initial deposit</span>
<span style="left:218.75px;top:332.56px;font-size:8.97px;line-height:12px;color:#000;">1,632</span>
<span style="left:267.12px;top:332.56px;font-size:8.97px;line-height:12px;color:#000;">2%</span>
<span style="left:31px;top:344.62px;font-size:8.97px;line-height:12px;color:#000;">Total</span>
<span style="left:213.76px;top:344.62px;font-size:8.97px;line-height:12px;color:#000;">67,426</span>
<span style="left:262.13px;top:344.62px;font-size:8.97px;line-height:12px;color:#000;">100%</span>
<div style="left:29px;top:271px;width:272px;height:1px;background:#787878;"></div>
<div style="left:29px;top:272px;width:272px;height:11px;background:#000;"></div>
<div style="left:29px;top:283px;width:272px;height:1px;background:#030303;"></div>
<span style="left:34.8px;top:272.21px;font-size:8.97px;line-height:12px;color:#fff;font-weight:bold;">Uses USD &#x27;000s</span>
<div style="left:28.6px;top:247.33px;width:272.4px;height:1px;background:#222;"></div>
<div style="left:28.6px;top:343.89px;width:272.4px;height:1px;background:#222;"></div>
<div style="left:320px;top:199px;width:272px;height:1px;background:#0d0d0d;"></div>
<div style="left:320px;top:200px;width:272px;height:11px;background:#000;"></div>
<div style="left:320px;top:211px;width:272px;height:1px;background:#6e6e6e;"></div>
<span style="left:325.2px;top:199.78px;font-size:8.97px;line-height:12px;color:#fff;font-weight:bold;">Debt Ratios</span>
<span style="left:503.08px;top:199.78px;font-size:8.97px;line-height:12px;color:#fff;font-weight:bold;">Min</span>
<div style="left:537px;top:199px;width:56px;height:13px;background:#000;border:2px solid #3f8560;box-sizing:border-box;"></div>
<div style="left:539px;top:201px;width:52px;height:9px;border:1px solid #5a5a5a;box-sizing:border-box;"></div>
<div style="left:590px;top:210px;width:3px;height:3px;background:#2f7d54;"></div>
<span style="left:547.36px;top:199.78px;font-size:8.97px;line-height:12px;color:#fff;font-weight:bold;">Average</span>
<span style="left:325.2px;top:211.85px;font-size:8.97px;line-height:12px;color:#000;">DSCR</span>
<span style="left:511.96px;top:211.85px;font-size:8.97px;line-height:12px;color:#000;">1.25 x</span>
<span style="left:565.76px;top:211.85px;font-size:8.97px;line-height:12px;color:#000;">1.37 x</span>
<span style="left:325.2px;top:223.93px;font-size:8.97px;line-height:12px;color:#000;">LLCR</span>
<span style="left:511.96px;top:223.93px;font-size:8.97px;line-height:12px;color:#000;">1.37 x</span>
<span style="left:565.76px;top:223.93px;font-size:8.97px;line-height:12px;color:#000;">1.56 x</span>
<div style="left:320px;top:247px;width:218px;height:1px;background:#545454;"></div>
<div style="left:320px;top:248px;width:218px;height:11px;background:#000;"></div>
<div style="left:320px;top:259px;width:218px;height:1px;background:#262626;"></div>
<span style="left:325.2px;top:248.06px;font-size:8.97px;line-height:12px;color:#fff;font-weight:bold;">Debt Metrics</span>
<span style="left:325.2px;top:260.13px;font-size:8.97px;line-height:12px;color:#000;">Leverage</span>
<span style="left:518.25px;top:260.13px;font-size:8.97px;line-height:12px;color:#000;">87%</span>
<span style="left:325.2px;top:272.21px;font-size:8.97px;line-height:12px;color:#000;">Term loan size $000s</span>
<span style="left:505.16px;top:272.21px;font-size:8.97px;line-height:12px;color:#000;">58,571</span>
<span style="left:325.2px;top:284.28px;font-size:8.97px;line-height:12px;color:#000;">Project CAPEX</span>
<span style="left:505.16px;top:284.28px;font-size:8.97px;line-height:12px;color:#000;">67,426</span>
<div style="left:320px;top:307px;width:218px;height:1px;background:#adadad;"></div>
<div style="left:320px;top:308px;width:218px;height:12px;background:#000;"></div>
<div style="left:320px;top:320px;width:218px;height:1px;background:#cccccc;"></div>
<span style="left:325.2px;top:308.42px;font-size:8.97px;line-height:12px;color:#fff;font-weight:bold;">Returns (Post-Tax)</span>
<span style="left:502.83px;top:308.42px;font-size:8.97px;line-height:12px;color:#fff;font-weight:bold;">Life</span>
<span style="left:325.2px;top:320.49px;font-size:8.97px;line-height:12px;color:#000;">Project (Unlevered IRR)</span>
<span style="left:515.75px;top:320.49px;font-size:8.97px;line-height:12px;color:#000;">7.6%</span>
<span style="left:325.2px;top:332.56px;font-size:8.97px;line-height:12px;color:#000;">Blended Equity IRR</span>
<span style="left:510.77px;top:332.56px;font-size:8.97px;line-height:12px;color:#000;">15.0%</span>
<div style="left:611px;top:199px;width:302px;height:1px;background:#0d0d0d;"></div>
<div style="left:611px;top:200px;width:302px;height:11px;background:#000;"></div>
<div style="left:611px;top:211px;width:302px;height:1px;background:#6e6e6e;"></div>
<span style="left:616.4px;top:199.78px;font-size:8.97px;line-height:12px;color:#fff;font-weight:bold;">Timing</span>
<span style="left:785.48px;top:199.78px;font-size:8.97px;line-height:12px;color:#fff;font-weight:bold;">Start</span>
<span style="left:821.46px;top:199.78px;font-size:8.97px;line-height:12px;color:#fff;font-weight:bold;">Duration</span>
<span style="left:879.13px;top:199.78px;font-size:8.97px;line-height:12px;color:#fff;font-weight:bold;">End</span>
<span style="left:616.4px;top:211.85px;font-size:8.97px;line-height:12px;color:#000;">Construction</span>
<span style="left:777.9px;top:211.85px;font-size:8.97px;line-height:12px;color:#000;">1-Jan-19</span>
<span style="left:819.16px;top:211.85px;font-size:8.97px;line-height:12px;color:#000;">12 Mnth(s)</span>
<span style="left:868.06px;top:211.85px;font-size:8.97px;line-height:12px;color:#000;">31-Dec-19</span>
<span style="left:616.4px;top:223.93px;font-size:8.97px;line-height:12px;color:#000;">Operations</span>
<span style="left:777.9px;top:223.93px;font-size:8.97px;line-height:12px;color:#000;">1-Jan-20</span>
<span style="left:824.73px;top:223.93px;font-size:8.97px;line-height:12px;color:#000;">30 Yr(s)</span>
<span style="left:868.06px;top:223.93px;font-size:8.97px;line-height:12px;color:#000;">31-Dec-49</span>
<span style="left:616.4px;top:236px;font-size:8.97px;line-height:12px;color:#000;">PPA tenor</span>
<span style="left:777.9px;top:236px;font-size:8.97px;line-height:12px;color:#000;">1-Jan-20</span>
<span style="left:824.73px;top:236px;font-size:8.97px;line-height:12px;color:#000;">20 Yr(s)</span>
<span style="left:868.06px;top:236px;font-size:8.97px;line-height:12px;color:#000;">31-Dec-39</span>
<span style="left:616.4px;top:248.06px;font-size:8.97px;line-height:12px;color:#000;">Term loan tenor</span>
<span style="left:777.9px;top:248.06px;font-size:8.97px;line-height:12px;color:#000;">1-Jan-20</span>
<span style="left:824.73px;top:248.06px;font-size:8.97px;line-height:12px;color:#000;">20 Yr(s)</span>
<span style="left:868.06px;top:248.06px;font-size:8.97px;line-height:12px;color:#000;">31-Dec-39</span>
<span style="left:616.4px;top:260.13px;font-size:8.97px;line-height:12px;color:#000;">Term loan grace period</span>
<span style="left:777.9px;top:260.13px;font-size:8.97px;line-height:12px;color:#000;">1-Jan-20</span>
<span style="left:821.66px;top:260.13px;font-size:8.97px;line-height:12px;color:#000;">3 Mnth(s)</span>
<span style="left:868.31px;top:260.13px;font-size:8.97px;line-height:12px;color:#000;">31-Mar-20</span>
<div style="left:611px;top:283px;width:205px;height:1px;background:#8a8a8a;"></div>
<div style="left:611px;top:284px;width:205px;height:12px;background:#000;"></div>
<span style="left:616.4px;top:284.28px;font-size:8.97px;line-height:12px;color:#fff;font-weight:bold;">Project Details</span>
<span style="left:616.4px;top:296.35px;font-size:8.97px;line-height:12px;color:#000;">PPA Price $/MW</span>
<span style="left:790.31px;top:296.35px;font-size:8.97px;line-height:12px;color:#000;">46</span>
<span style="left:616.4px;top:308.42px;font-size:8.97px;line-height:12px;color:#000;">Rated Capacity MW</span>
<span style="left:790.31px;top:308.42px;font-size:8.97px;line-height:12px;color:#000;">50</span>
<span style="left:616.4px;top:320.49px;font-size:8.97px;line-height:12px;color:#000;">P50 Capacity Factor</span>
<span style="left:786.32px;top:320.49px;font-size:8.97px;line-height:12px;color:#000;">36%</span>
<span style="left:616.4px;top:332.56px;font-size:8.97px;line-height:12px;color:#000;">Curtailment reduction</span>
<span style="left:788.82px;top:332.56px;font-size:8.97px;line-height:12px;color:#000;">5%</span>
<span style="left:616.4px;top:344.62px;font-size:8.97px;line-height:12px;color:#000;">Degradation rate</span>
<span style="left:785.08px;top:344.62px;font-size:8.97px;line-height:12px;color:#000;">0.0%</span>
<div style="left:45px;top:399.6px;width:415px;height:1px;background:#cfcfcf;"></div>
<svg style="left:45px;top:400px" width="415" height="128" viewBox="45 400 415 128"><defs><filter id="gl45" x="-5%" y="-5%" width="110%" height="110%"><feGaussianBlur stdDeviation="1.15"/></filter></defs><rect x="45" y="400" width="415" height="128" fill="#404040"/><path d="M90 413.7H452" stroke="#4e4e4e" stroke-width="1"/><path d="M90 462.7H452" stroke="#4e4e4e" stroke-width="1"/><path d="M90 511.7H452" stroke="#4e4e4e" stroke-width="1"/><path d="M91 531V509.74M100.08 531V526.75M103.11 531V508.29M112.19 531V525.55M115.22 531V506.83M124.3 531V524.33M127.33 531V505.34M133.38 531V530.08M136.41 531V523.1M139.44 531V503.83M145.5 531V528.93M148.52 531V521.85M151.55 531V502.3M157.6 531V527.76M160.63 531V520.58M163.66 531V500.75M166.69 531V530.59M169.72 531V526.58M172.74 531V519.29M175.77 531V499.17M178.8 531V529.45M181.82 531V525.38M184.85 531V517.98M187.88 531V497.58M190.91 531V528.29M193.94 531V524.16M196.96 531V516.66M199.99 531V495.96M203.02 531V527.11M206.04 531V522.92M209.07 531V515.32M212.1 531V494.31M215.13 531V525.92M218.16 531V521.67M221.18 531V513.95M224.21 531V492.64M227.24 531V524.71M230.26 531V520.4M233.29 531V512.57M236.32 531V490.95M239.35 531V523.48M242.38 531V519.11M245.4 531V511.16M248.43 531V489.24M251.46 531V522.24M254.48 531V517.8M257.51 531V509.74M260.54 531V487.49M263.57 531V520.97M266.6 531V516.47M269.62 531V508.3M272.65 531V485.73M275.68 531V519.69M278.7 531V515.12M281.73 531V506.83M284.76 531V483.93M287.79 531V518.39M290.81 531V513.76M293.84 531V505.34M296.87 531V482.12M299.9 531V517.07M302.92 531V512.37M305.95 531V503.84M308.98 531V480.27M312.01 531V515.73M315.03 531V510.96M318.06 531V502.31M321.09 531V478.4M324.12 531V514.37M327.14 531V509.54M330.17 531V500.75" stroke="#5592d0" stroke-width="4.0" stroke-linecap="round" fill="none" opacity="0.6" filter="url(#gl45)"/><path d="M91 531V509.74M100.08 531V526.75M103.11 531V508.29M112.19 531V525.55M115.22 531V506.83M124.3 531V524.33M127.33 531V505.34M133.38 531V530.08M136.41 531V523.1M139.44 531V503.83M145.5 531V528.93M148.52 531V521.85M151.55 531V502.3M157.6 531V527.76M160.63 531V520.58M163.66 531V500.75M166.69 531V530.59M169.72 531V526.58M172.74 531V519.29M175.77 531V499.17M178.8 531V529.45M181.82 531V525.38M184.85 531V517.98M187.88 531V497.58M190.91 531V528.29M193.94 531V524.16M196.96 531V516.66M199.99 531V495.96M203.02 531V527.11M206.04 531V522.92M209.07 531V515.32M212.1 531V494.31M215.13 531V525.92M218.16 531V521.67M221.18 531V513.95M224.21 531V492.64M227.24 531V524.71M230.26 531V520.4M233.29 531V512.57M236.32 531V490.95M239.35 531V523.48M242.38 531V519.11M245.4 531V511.16M248.43 531V489.24M251.46 531V522.24M254.48 531V517.8M257.51 531V509.74M260.54 531V487.49M263.57 531V520.97M266.6 531V516.47M269.62 531V508.3M272.65 531V485.73M275.68 531V519.69M278.7 531V515.12M281.73 531V506.83M284.76 531V483.93M287.79 531V518.39M290.81 531V513.76M293.84 531V505.34M296.87 531V482.12M299.9 531V517.07M302.92 531V512.37M305.95 531V503.84M308.98 531V480.27M312.01 531V515.73M315.03 531V510.96M318.06 531V502.31M321.09 531V478.4M324.12 531V514.37M327.14 531V509.54M330.17 531V500.75" stroke="#5592d0" stroke-width="1.4" fill="none"/><path d="M333.2 531V476.5M336.23 531V513M339.25 531V508.09M342.28 531V499.18M345.31 531V474.46M348.34 531V511.51M351.37 531V506.53M354.39 531V497.48M357.42 531V472.37M360.45 531V510M363.47 531V504.94M366.5 531V495.75M369.53 531V470.25M372.56 531V508.46M375.58 531V503.32M378.61 531V493.99M381.64 531V468.09M384.67 531V506.89M387.69 531V501.68M390.72 531V492.2M393.75 531V465.9M396.78 531V505.31M399.81 531V500.01M402.83 531V490.39M405.86 531V463.68M408.89 531V503.7M411.91 531V498.31M414.94 531V488.54M417.97 531V461.43M421 531V502.06M424.02 531V496.59M427.05 531V486.67M430.08 531V459.14M433.11 531V500.4M436.13 531V494.85M439.16 531V484.77M442.19 531V456.81M445.22 531V498.71M448.25 531V493.07M451.27 531V482.84" stroke="#e27b30" stroke-width="4.0" stroke-linecap="round" fill="none" opacity="0.6" filter="url(#gl45)"/><path d="M333.2 531V476.5M336.23 531V513M339.25 531V508.09M342.28 531V499.18M345.31 531V474.46M348.34 531V511.51M351.37 531V506.53M354.39 531V497.48M357.42 531V472.37M360.45 531V510M363.47 531V504.94M366.5 531V495.75M369.53 531V470.25M372.56 531V508.46M375.58 531V503.32M378.61 531V493.99M381.64 531V468.09M384.67 531V506.89M387.69 531V501.68M390.72 531V492.2M393.75 531V465.9M396.78 531V505.31M399.81 531V500.01M402.83 531V490.39M405.86 531V463.68M408.89 531V503.7M411.91 531V498.31M414.94 531V488.54M417.97 531V461.43M421 531V502.06M424.02 531V496.59M427.05 531V486.67M430.08 531V459.14M433.11 531V500.4M436.13 531V494.85M439.16 531V484.77M442.19 531V456.81M445.22 531V498.71M448.25 531V493.07M451.27 531V482.84" stroke="#e27b30" stroke-width="1.4" fill="none"/></svg>
<span style="left:54.8px;top:406.3px;font-size:9.6px;line-height:13px;color:#ececec;letter-spacing:-0.12px;-webkit-text-stroke:.3px #ececec;">4,000</span>
<span style="left:54.8px;top:455.3px;font-size:9.6px;line-height:13px;color:#ececec;letter-spacing:-0.12px;-webkit-text-stroke:.3px #ececec;">3,000</span>
<span style="left:54.8px;top:504.3px;font-size:9.6px;line-height:13px;color:#ececec;letter-spacing:-0.12px;-webkit-text-stroke:.3px #ececec;">2,000</span>
<div style="left:127px;top:430.2px;width:6.8px;height:7.4px;border:1px solid #4878aa;box-sizing:border-box;"></div>
<span style="left:136.6px;top:426.6px;font-size:11.2px;line-height:15px;color:#ececec;letter-spacing:-0.05px;-webkit-text-stroke:.3px #ececec;">PPA revenue</span>
<div style="left:236.2px;top:430.2px;width:6.8px;height:7.4px;border:1px solid #b8682f;box-sizing:border-box;"></div>
<span style="left:246px;top:426.6px;font-size:11.2px;line-height:15px;color:#ececec;letter-spacing:0.06px;-webkit-text-stroke:.3px #ececec;">Merchant revenue</span>
<div style="left:501px;top:399px;width:413.2px;height:1px;background:#9f9f9f;"></div>
<svg style="left:501px;top:400px" width="413.2" height="128" viewBox="501 400 413.2 128"><defs><filter id="gl501" x="-5%" y="-5%" width="110%" height="110%"><feGaussianBlur stdDeviation="1.15"/></filter></defs><rect x="501" y="400" width="413.2" height="128" fill="#404040"/><path d="M552.2 412H903.8" stroke="#4e4e4e" stroke-width="1"/><path d="M552.2 461.9H903.8" stroke="#4e4e4e" stroke-width="1"/><path d="M552.2 511.8H903.8" stroke="#4e4e4e" stroke-width="1"/><path d="M552.4 531V505.51M556.82 531V483.9M561.25 531V496.19M565.67 531V486.35M570.1 531V461.6M574.52 531V481.93M578.95 531V494.41M583.38 531V484.41M587.8 531V459.28M592.23 531V479.92M596.65 531V492.6M601.07 531V482.45M605.5 531V456.92M609.92 531V477.88M614.35 531V490.76M618.77 531V480.45M623.2 531V454.53M627.62 531V475.82M632.05 531V488.89M636.48 531V478.42M640.9 531V452.1M645.32 531V473.72M649.75 531V486.99M654.17 531V476.36M658.6 531V449.63M663.02 531V471.58M667.45 531V485.06M671.88 531V474.27M676.3 531V447.13M680.72 531V469.42M685.15 531V483.11M689.57 531V472.14M694 531V444.58M698.42 531V467.22M702.85 531V481.12M707.27 531V469.99M711.7 531V442M716.12 531V464.99M720.55 531V479.1M724.97 531V467.8M729.4 531V439.38M733.82 531V462.72M738.25 531V477.05M742.67 531V465.57M747.1 531V436.71M751.52 531V460.41M755.95 531V474.97M760.38 531V463.31M764.8 531V434.01M769.22 531V458.08M773.65 531V472.86M778.07 531V461.02M782.5 531V431.26M786.92 531V455.7M791.35 531V470.71M795.77 531V458.69M800.2 531V428.47M804.62 531V453.29M809.05 531V468.53M813.47 531V456.33M817.9 531V425.63M822.33 531V450.84M826.75 531V466.32M831.17 531V453.92M835.6 531V422.76M840.02 531V459.3M844.45 531V493.34M848.88 531V484.85M853.3 531V461.7M857.72 531V475.07M862.15 531V492.14M866.58 531V483.66M871 531V460M875.42 531V473.18M879.85 531V492.14M884.27 531V482.46M888.7 531V458.51M893.12 531V472.68M897.55 531V490.84M901.97 531V480.46" stroke="#5592d0" stroke-width="4.4" stroke-linecap="round" fill="none" opacity="0.6" filter="url(#gl501)"/><path d="M552.4 531V505.51M556.82 531V483.9M561.25 531V496.19M565.67 531V486.35M570.1 531V461.6M574.52 531V481.93M578.95 531V494.41M583.38 531V484.41M587.8 531V459.28M592.23 531V479.92M596.65 531V492.6M601.07 531V482.45M605.5 531V456.92M609.92 531V477.88M614.35 531V490.76M618.77 531V480.45M623.2 531V454.53M627.62 531V475.82M632.05 531V488.89M636.48 531V478.42M640.9 531V452.1M645.32 531V473.72M649.75 531V486.99M654.17 531V476.36M658.6 531V449.63M663.02 531V471.58M667.45 531V485.06M671.88 531V474.27M676.3 531V447.13M680.72 531V469.42M685.15 531V483.11M689.57 531V472.14M694 531V444.58M698.42 531V467.22M702.85 531V481.12M707.27 531V469.99M711.7 531V442M716.12 531V464.99M720.55 531V479.1M724.97 531V467.8M729.4 531V439.38M733.82 531V462.72M738.25 531V477.05M742.67 531V465.57M747.1 531V436.71M751.52 531V460.41M755.95 531V474.97M760.38 531V463.31M764.8 531V434.01M769.22 531V458.08M773.65 531V472.86M778.07 531V461.02M782.5 531V431.26M786.92 531V455.7M791.35 531V470.71M795.77 531V458.69M800.2 531V428.47M804.62 531V453.29M809.05 531V468.53M813.47 531V456.33M817.9 531V425.63M822.33 531V450.84M826.75 531V466.32M831.17 531V453.92M835.6 531V422.76M840.02 531V459.3M844.45 531V493.34M848.88 531V484.85M853.3 531V461.7M857.72 531V475.07M862.15 531V492.14M866.58 531V483.66M871 531V460M875.42 531V473.18M879.85 531V492.14M884.27 531V482.46M888.7 531V458.51M893.12 531V472.68M897.55 531V490.84M901.97 531V480.46" stroke="#5592d0" stroke-width="1.5" fill="none"/><path d="M556.82 531V515.78M561.25 531V525M565.67 531V517.61M570.1 531V499.05M574.52 531V514.29M578.95 531V523.66M583.38 531V516.16M587.8 531V497.31M592.23 531V512.79M596.65 531V522.3M601.07 531V514.68M605.5 531V495.54M609.92 531V511.26M614.35 531V520.92M618.77 531V513.19M623.2 531V493.75M627.62 531V509.71M632.05 531V519.52M636.48 531V511.66M640.9 531V491.93M645.32 531V508.14M649.75 531V518.09M654.17 531V510.12M658.6 531V490.08M663.02 531V506.54M667.45 531V516.65M671.88 531V508.55M676.3 531V488.2M680.72 531V504.91M685.15 531V515.18M689.57 531V506.96M694 531V486.29M698.42 531V503.26M702.85 531V513.69M707.27 531V505.34M711.7 531V484.35M716.12 531V501.59M720.55 531V512.18M724.97 531V503.7M729.4 531V482.38M733.82 531V499.89M738.25 531V510.64M742.67 531V502.03M747.1 531V480.38M751.52 531V498.16M755.95 531V509.08M760.38 531V500.34M764.8 531V478.35M769.22 531V496.41M773.65 531V507.49M778.07 531V498.62M782.5 531V476.29M786.92 531V494.63M791.35 531V505.88M795.77 531V496.87M800.2 531V474.2M804.62 531V492.82M809.05 531V504.25M813.47 531V495.09M817.9 531V472.08M822.33 531V490.98M826.75 531V502.59M831.17 531V493.29M835.6 531V469.92M840.02 531V488.81M844.45 531V516.24M848.88 531V509.4M853.3 531V490.74M857.72 531V501.52M862.15 531V515.28M866.58 531V508.44M871 531V489.37M875.42 531V499.99M879.85 531V515.28M884.27 531V507.47M888.7 531V488.17" stroke="#e27b30" stroke-width="3.4" stroke-linecap="round" fill="none" opacity="0.45" filter="url(#gl501)"/><path d="M556.82 531V515.78M561.25 531V525M565.67 531V517.61M570.1 531V499.05M574.52 531V514.29M578.95 531V523.66M583.38 531V516.16M587.8 531V497.31M592.23 531V512.79M596.65 531V522.3M601.07 531V514.68M605.5 531V495.54M609.92 531V511.26M614.35 531V520.92M618.77 531V513.19M623.2 531V493.75M627.62 531V509.71M632.05 531V519.52M636.48 531V511.66M640.9 531V491.93M645.32 531V508.14M649.75 531V518.09M654.17 531V510.12M658.6 531V490.08M663.02 531V506.54M667.45 531V516.65M671.88 531V508.55M676.3 531V488.2M680.72 531V504.91M685.15 531V515.18M689.57 531V506.96M694 531V486.29M698.42 531V503.26M702.85 531V513.69M707.27 531V505.34M711.7 531V484.35M716.12 531V501.59M720.55 531V512.18M724.97 531V503.7M729.4 531V482.38M733.82 531V499.89M738.25 531V510.64M742.67 531V502.03M747.1 531V480.38M751.52 531V498.16M755.95 531V509.08M760.38 531V500.34M764.8 531V478.35M769.22 531V496.41M773.65 531V507.49M778.07 531V498.62M782.5 531V476.29M786.92 531V494.63M791.35 531V505.88M795.77 531V496.87M800.2 531V474.2M804.62 531V492.82M809.05 531V504.25M813.47 531V495.09M817.9 531V472.08M822.33 531V490.98M826.75 531V502.59M831.17 531V493.29M835.6 531V469.92M840.02 531V488.81M844.45 531V516.24M848.88 531V509.4M853.3 531V490.74M857.72 531V501.52M862.15 531V515.28M866.58 531V508.44M871 531V489.37M875.42 531V499.99M879.85 531V515.28M884.27 531V507.47M888.7 531V488.17" stroke="#e27b30" stroke-width="1.4" fill="none"/></svg>
<span style="left:516.9px;top:404.6px;font-size:9.6px;line-height:13px;color:#ececec;letter-spacing:-0.18px;-webkit-text-stroke:.3px #ececec;">2,000</span>
<span style="left:516.9px;top:454.5px;font-size:9.6px;line-height:13px;color:#ececec;letter-spacing:-0.18px;-webkit-text-stroke:.3px #ececec;">1,500</span>
<span style="left:516.9px;top:504.4px;font-size:9.6px;line-height:13px;color:#ececec;letter-spacing:-0.18px;-webkit-text-stroke:.3px #ececec;">1,000</span>
<div style="left:605.6px;top:425.2px;width:6.6px;height:7.2px;border:1px solid #4878aa;box-sizing:border-box;"></div>
<span style="left:614.8px;top:421.5px;font-size:11.2px;line-height:15px;color:#ececec;letter-spacing:-0.13px;-webkit-text-stroke:.3px #ececec;">CFADS P50</span>
<div style="left:730.4px;top:425.2px;width:6.6px;height:7.2px;border:1px solid #b8682f;box-sizing:border-box;"></div>
<span style="left:739.8px;top:421.5px;font-size:11.2px;line-height:15px;color:#ececec;letter-spacing:0.03px;-webkit-text-stroke:.3px #ececec;">Scheduled debt service</span>
<div style="left:0px;top:528px;width:984px;height:16px;background:#f3f3f3;"></div>
<div style="left:0px;top:527.6px;width:972.6px;height:1px;background:#c6c6c6;"></div>
<svg style="left:15px;top:533.2px" width="3.4" height="5.6" viewBox="0 0 3.4 5.6"><path d="M3.2 .2L.4 2.8 3.2 5.4Z" fill="#c4c4c4"/></svg>
<svg style="left:30.8px;top:533.2px" width="3.4" height="5.6" viewBox="0 0 3.4 5.6"><path d="M.2 .2L3 2.8 .2 5.4Z" fill="#c4c4c4"/></svg>
<div style="left:56.8px;top:528px;width:55.6px;height:14.4px;background:#fff;"></div>
<div style="left:56.4px;top:528px;width:1px;height:13.4px;background:#c9c9c9;"></div>
<div style="left:112px;top:528px;width:1px;height:13.4px;background:#c9c9c9;"></div>
<div style="left:56.6px;top:541px;width:56px;height:1.6px;background:#217346;"></div>
<span style="left:63.4px;top:528px;font-size:9.3px;line-height:13px;color:#217346;font-weight:bold;letter-spacing:-0.11px;">Summary</span>
<span style="left:119.5px;top:528px;font-size:9.3px;line-height:13px;color:#4d4d4d;letter-spacing:0.32px;">Input</span>
<span style="left:156.5px;top:528px;font-size:9.3px;line-height:13px;color:#4d4d4d;letter-spacing:-0.07px;">Macro</span>
<span style="left:197.5px;top:528px;font-size:9.3px;line-height:13px;color:#4d4d4d;letter-spacing:-0.02px;">ConFunding</span>
<span style="left:263px;top:528px;font-size:9.3px;line-height:13px;color:#4d4d4d;letter-spacing:-0.23px;">ConCosts</span>
<span style="left:316.8px;top:528px;font-size:9.3px;line-height:13px;color:#4d4d4d;letter-spacing:-0.03px;">ConTime</span>
<span style="left:370px;top:528px;font-size:9.3px;line-height:13px;color:#4d4d4d;letter-spacing:-0.01px;">Timing</span>
<span style="left:413.8px;top:528px;font-size:9.3px;line-height:13px;color:#4d4d4d;letter-spacing:-0.32px;">Revenue</span>
<span style="left:463.8px;top:528px;font-size:9.3px;line-height:13px;color:#4d4d4d;letter-spacing:-0.26px;">Opex</span>
<span style="left:502px;top:528px;font-size:9.3px;line-height:13px;color:#4d4d4d;letter-spacing:-0.06px;">Wrk Capital</span>
<span style="left:565.8px;top:528px;font-size:9.3px;line-height:13px;color:#4d4d4d;letter-spacing:-0.6px;">PP&amp;E</span>
<span style="left:603.2px;top:528px;font-size:9.3px;line-height:13px;color:#4d4d4d;letter-spacing:-0.04px;">Equity</span>
<span style="left:644.2px;top:528px;font-size:9.3px;line-height:13px;color:#4d4d4d;letter-spacing:-0.53px;">TAX</span>
<span style="left:675.5px;top:528px;font-size:9.3px;line-height:13px;color:#4d4d4d;letter-spacing:-0.04px;">Debt</span>
<span style="left:710.5px;top:528px;font-size:9.3px;line-height:13px;color:#4d4d4d;letter-spacing:-0.73px;">DSRA</span>
<span style="left:748.8px;top:528px;font-size:9.3px;line-height:13px;color:#4d4d4d;letter-spacing:-0.9px;">SHL</span>
<span style="left:779.8px;top:528px;font-size:9.3px;line-height:13px;color:#4d4d4d;letter-spacing:-0.17px;">Returns</span>
<span style="left:826.2px;top:528px;font-size:9.3px;line-height:13px;color:#4d4d4d;letter-spacing:-1.29px;">FS</span>
<span style="left:850px;top:528px;font-size:9.3px;line-height:13px;color:#4d4d4d;letter-spacing:-0.3px;">Checks</span>
<div style="left:149px;top:530.6px;width:1px;height:9.6px;background:#ababab;"></div>
<div style="left:189px;top:530.6px;width:1px;height:9.6px;background:#ababab;"></div>
<div style="left:256.3px;top:530.6px;width:1px;height:9.6px;background:#ababab;"></div>
<div style="left:309px;top:530.6px;width:1px;height:9.6px;background:#ababab;"></div>
<div style="left:361.5px;top:530.6px;width:1px;height:9.6px;background:#ababab;"></div>
<div style="left:405.7px;top:530.6px;width:1px;height:9.6px;background:#ababab;"></div>
<div style="left:455.7px;top:530.6px;width:1px;height:9.6px;background:#ababab;"></div>
<div style="left:492px;top:530.6px;width:1px;height:9.6px;background:#ababab;"></div>
<div style="left:557.7px;top:530.6px;width:1px;height:9.6px;background:#ababab;"></div>
<div style="left:595px;top:530.6px;width:1px;height:9.6px;background:#ababab;"></div>
<div style="left:635.7px;top:530.6px;width:1px;height:9.6px;background:#ababab;"></div>
<div style="left:667.5px;top:530.6px;width:1px;height:9.6px;background:#ababab;"></div>
<div style="left:702.5px;top:530.6px;width:1px;height:9.6px;background:#ababab;"></div>
<div style="left:741.3px;top:530.6px;width:1px;height:9.6px;background:#ababab;"></div>
<div style="left:772px;top:530.6px;width:1px;height:9.6px;background:#ababab;"></div>
<div style="left:818.7px;top:530.6px;width:1px;height:9.6px;background:#ababab;"></div>
<div style="left:842.5px;top:530.6px;width:1px;height:9.6px;background:#ababab;"></div>
<div style="left:885.5px;top:530.6px;width:1px;height:9.6px;background:#ababab;"></div>
<svg style="left:903.6px;top:530.3px" width="12" height="12" viewBox="0 0 12 12"><circle cx="6" cy="6" r="5.3" fill="#fff" stroke="#6a6a6a" stroke-width=".9"/><path d="M6 3.2v5.6M3.2 6h5.6" stroke="#6a6a6a" stroke-width=".9"/></svg>
<div style="left:961.8px;top:533.2px;width:1px;height:1px;background:#8a8a8a;"></div>
<div style="left:961.8px;top:536.2px;width:1px;height:1px;background:#8a8a8a;"></div>
<div style="left:961.8px;top:539.2px;width:1px;height:1px;background:#8a8a8a;"></div>
<div style="left:0px;top:544px;width:984px;height:11px;background:#217346;"></div>
<span style="left:4px;top:546.9px;font-size:6.6px;line-height:9px;color:#fff;letter-spacing:-0.35px;">READY</span>
<svg style="left:37px;top:547px" width="8.4" height="8" viewBox="0 0 8.4 8"><rect x=".4" y="1.6" width="7.6" height="6.4" fill="#cfe3d7" stroke="#fff" stroke-width=".6"/><rect x=".2" y=".2" width="3.2" height="2.6" fill="#fff"/><path d="M2.2 3.6v4.4M4.2 3.6v4.4M6.2 3.6v4.4" stroke="#217346" stroke-width=".8"/></svg>
<div style="left:801.8px;top:544px;width:21.4px;height:11px;background:#185c37;"></div>
<svg style="left:808px;top:546.8px" width="8.6" height="8.2" viewBox="0 0 8.6 8.2"><rect x=".4" y=".4" width="7.8" height="7.6" fill="none" stroke="#fff" stroke-width=".8"/><path d="M.4 2.9h7.8M.4 5.4h7.8M3 .4v7.6M5.6 .4v7.6" stroke="#fff" stroke-width=".6"/></svg>
<svg style="left:830px;top:546.8px" width="8.6" height="8.2" viewBox="0 0 8.6 8.2"><rect x=".4" y=".4" width="7.8" height="7.6" fill="none" stroke="#cfe3d7" stroke-width=".8"/><rect x="2.2" y="1.8" width="4.2" height="4.8" fill="none" stroke="#cfe3d7" stroke-width=".7"/></svg>
<svg style="left:853px;top:546.8px" width="8.6" height="8.2" viewBox="0 0 8.6 8.2"><rect x=".4" y=".4" width="7.8" height="7.6" fill="none" stroke="#fff" stroke-width=".8"/><path d="M.4 4.6h3.4V.4" fill="none" stroke="#fff" stroke-width=".8"/><rect x="4.4" y=".8" width="3.4" height="3.8" fill="#fff"/></svg>
<div style="left:871.4px;top:550.6px;width:4.4px;height:1.2px;background:#fff;"></div>
<div style="left:878px;top:550.8px;width:69.6px;height:0.9px;background:#e6efe9;"></div>
<div style="left:912px;top:547.4px;width:1.8px;height:8px;background:#fff;"></div>
<div style="left:949.8px;top:550.6px;width:5.6px;height:1.3px;background:#fff;"></div>
<div style="left:952px;top:548.4px;width:1.3px;height:5.6px;background:#fff;"></div>
<span style="left:965.6px;top:546.4px;font-size:7.3px;line-height:10px;color:#fff;letter-spacing:-0.47px;">100%</span>
</div></body></html>
